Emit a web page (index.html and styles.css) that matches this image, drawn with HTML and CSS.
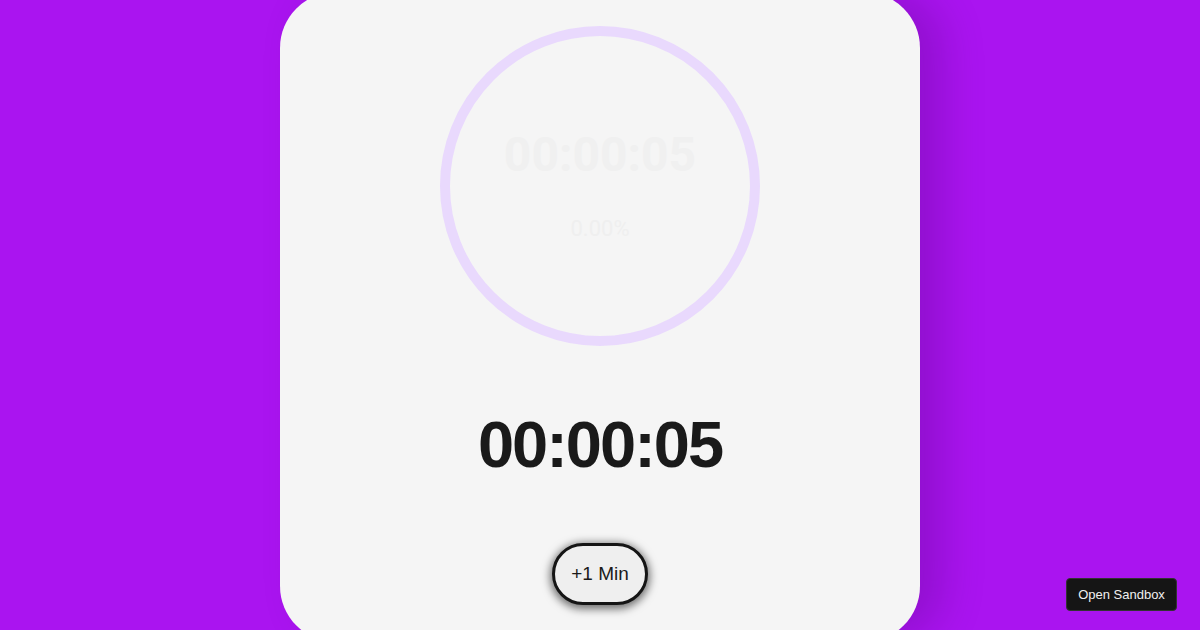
FILE: index.html
```html
<!DOCTYPE html>
<html lang="en">
<head>
    <meta charset="UTF-8">
    <meta name="viewport" content="width=device-width, initial-scale=1.0">
    <title>Timer</title>
    <link rel="stylesheet" href="styles.css">
</head>
<body>

<div class="card">
    <div class="ring">
        <div class="ring-time">00:00:05</div>
        <div class="ring-percent">0.00%</div>
    </div>
    <div class="time">00:00:05</div>
    <button class="add-btn">+1 Min</button>
</div>

<button class="sandbox-btn">Open Sandbox</button>

</body>
</html>
```

FILE: styles.css
```css
body {
    font-family: "Liberation Sans", Arial, sans-serif;
    background-color: #aa14f0;
    margin: 0;
    height: 630px;
    overflow: hidden;
    display: flex;
    justify-content: center;
}
.card {
    width: 640px;
    height: 650px;
    margin-top: -8px;
    background-color: #f5f5f5;
    border-radius: 56px;
    box-shadow: 24px 0 40px rgba(60, 0, 90, 0.22);
    display: flex;
    flex-direction: column;
    align-items: center;
    box-sizing: border-box;
    padding-top: 34px;
}
.ring {
    width: 320px;
    height: 320px;
    border: 10px solid #e9d9fd;
    border-radius: 50%;
    box-sizing: border-box;
    display: flex;
    flex-direction: column;
    align-items: center;
    padding-top: 95px;
}
.ring-time {
    font-family: Roboto, sans-serif;
    font-weight: bold;
    font-size: 48px;
    color: #f0f0f0;
    line-height: 1;
}
.ring-percent {
    font-family: Roboto, sans-serif;
    font-size: 22px;
    color: #efefef;
    margin-top: 37px;
}
.time {
    font-size: 65px;
    font-weight: bold;
    color: #1a1a1a;
    letter-spacing: -2px;
    margin-top: 66px;
    line-height: 1;
}
.add-btn {
    margin-top: 66px;
    width: 96px;
    height: 62px;
    border: 3px solid #151515;
    border-radius: 31px;
    background-color: #efefef;
    color: #1a1a1a;
    font-family: "Liberation Sans", Arial, sans-serif;
    font-size: 19px;
    box-shadow: 0 2px 8px 2px rgba(0, 0, 0, 0.55);
    cursor: pointer;
}
.sandbox-btn {
    position: absolute;
    right: 23px;
    bottom: 19px;
    width: 111px;
    height: 33px;
    background-color: #151515;
    color: #f0f0f0;
    border: 1px solid #333;
    border-radius: 4px;
    font-family: "Liberation Sans", Arial, sans-serif;
    font-size: 13px;
    cursor: pointer;
}
```
